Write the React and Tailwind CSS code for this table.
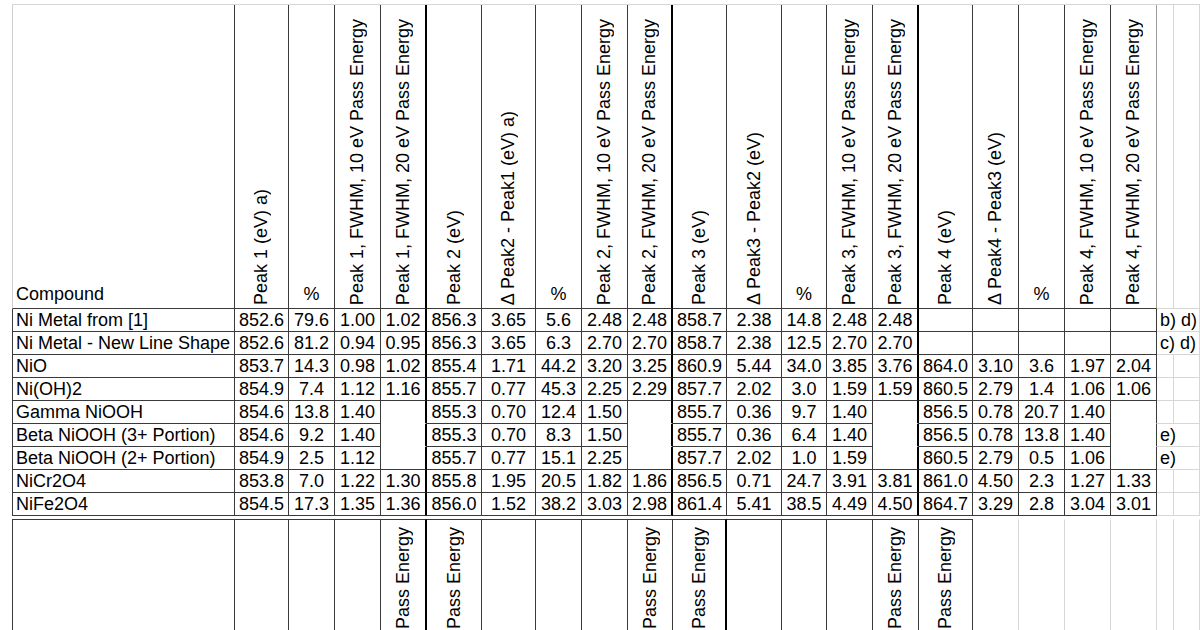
import React from "react";

const cols = [
  { w: "w-[223px]", h: "Compound", flat: true, left: true },
  { w: "w-[54px]", h: "Peak 1 (eV) a)" },
  { w: "w-[46px]", h: "%", flat: true },
  { w: "w-[46px]", h: "Peak 1, FWHM, 10 eV Pass Energy" },
  { w: "w-[46px]", h: "Peak 1, FWHM, 20 eV Pass Energy", thick: true },
  { w: "w-[55px]", h: "Peak 2 (eV)" },
  { w: "w-[54px]", h: "Δ Peak2 - Peak1 (eV) a)" },
  { w: "w-[46px]", h: "%", flat: true },
  { w: "w-[46px]", h: "Peak 2, FWHM, 10 eV Pass Energy" },
  { w: "w-[45px]", h: "Peak 2, FWHM, 20 eV Pass Energy", thick: true },
  { w: "w-[54px]", h: "Peak 3 (eV)" },
  { w: "w-[55px]", h: "Δ Peak3 - Peak2 (eV)" },
  { w: "w-[45px]", h: "%", flat: true },
  { w: "w-[46px]", h: "Peak 3, FWHM, 10 eV Pass Energy" },
  { w: "w-[46px]", h: "Peak 3, FWHM, 20 eV Pass Energy", thick: true },
  { w: "w-[54px]", h: "Peak 4 (eV)" },
  { w: "w-[46px]", h: "Δ Peak4 - Peak3 (eV)" },
  { w: "w-[46px]", h: "%", flat: true },
  { w: "w-[46px]", h: "Peak 4, FWHM, 10 eV Pass Energy" },
  { w: "w-[46px]", h: "Peak 4, FWHM, 20 eV Pass Energy" },
  { w: "w-[17px]", h: "", grid: true },
  { w: "w-[26px]", h: "", grid: true },
];

const rows = [
  ["Ni Metal from [1]", "852.6", "79.6", "1.00", "1.02", "856.3", "3.65", "5.6", "2.48", "2.48", "858.7", "2.38", "14.8", "2.48", "2.48", "", "", "", "", "", "b) d)", ""],
  ["Ni Metal - New Line Shape", "852.6", "81.2", "0.94", "0.95", "856.3", "3.65", "6.3", "2.70", "2.70", "858.7", "2.38", "12.5", "2.70", "2.70", "", "", "", "", "", "c) d)", ""],
  ["NiO", "853.7", "14.3", "0.98", "1.02", "855.4", "1.71", "44.2", "3.20", "3.25", "860.9", "5.44", "34.0", "3.85", "3.76", "864.0", "3.10", "3.6", "1.97", "2.04", "", ""],
  ["Ni(OH)2", "854.9", "7.4", "1.12", "1.16", "855.7", "0.77", "45.3", "2.25", "2.29", "857.7", "2.02", "3.0", "1.59", "1.59", "860.5", "2.79", "1.4", "1.06", "1.06", "", ""],
  ["Gamma NiOOH", "854.6", "13.8", "1.40", "", "855.3", "0.70", "12.4", "1.50", "", "855.7", "0.36", "9.7", "1.40", "", "856.5", "0.78", "20.7", "1.40", "", "", ""],
  ["Beta NiOOH (3+ Portion)", "854.6", "9.2", "1.40", "", "855.3", "0.70", "8.3", "1.50", "", "855.7", "0.36", "6.4", "1.40", "", "856.5", "0.78", "13.8", "1.40", "", "e)", ""],
  ["Beta NiOOH (2+ Portion)", "854.9", "2.5", "1.12", "", "855.7", "0.77", "15.1", "2.25", "", "857.7", "2.02", "1.0", "1.59", "", "860.5", "2.79", "0.5", "1.06", "", "e)", ""],
  ["NiCr2O4", "853.8", "7.0", "1.22", "1.30", "855.8", "1.95", "20.5", "1.82", "1.86", "856.5", "0.71", "24.7", "3.91", "3.81", "861.0", "4.50", "2.3", "1.27", "1.33", "", ""],
  ["NiFe2O4", "854.5", "17.3", "1.35", "1.36", "856.0", "1.52", "38.2", "3.03", "2.98", "861.4", "5.41", "38.5", "4.49", "4.50", "864.7", "3.29", "2.8", "3.04", "3.01", "", ""],
];

const THIN_R = "border-r border-r-[#3a3a3a]";
const THICK_R = "border-r-2 border-r-black";
const LIGHT_R = "border-r border-r-[#d6d6d6]";
const DARK_B = "border-b border-b-[#3a3a3a]";
const LIGHT_B = "border-b border-b-[#d6d6d6]";

function headerRight(c, i) {
  if (c.grid) return LIGHT_R;
  if (i === 19) return "border-r border-r-[#9a9a9a]";
  return c.thick ? THICK_R : THIN_R;
}

function Vertical({ children }) {
  return (
    <span className="[writing-mode:vertical-rl] rotate-180 whitespace-nowrap leading-[21px]">
      {children}
    </span>
  );
}

function HeaderCell({ c, i }) {
  const base = `${c.w} h-[304px] shrink-0 flex flex-col justify-end pb-[3px] ${headerRight(c, i)} ${c.grid ? LIGHT_B : DARK_B}`;
  if (c.left) {
    return (
      <div className={`${base} items-start pl-[3px] border-l border-l-[#cfcfcf]`}>
        <span className="whitespace-nowrap">{c.h}</span>
      </div>
    );
  }
  return (
    <div className={`${base} items-center`}>
      {c.flat ? <span>{c.h}</span> : c.h ? <Vertical>{c.h}</Vertical> : null}
    </div>
  );
}

const mergedCols = [4, 9, 14, 19];

function DataCell({ c, i, v, r }) {
  let right;
  if (i === 20) right = v ? "" : LIGHT_R;
  else if (c.grid) right = LIGHT_R;
  else right = c.thick ? THICK_R : THIN_R;
  let bottom;
  if (c.grid) bottom = LIGHT_B;
  else if ((r === 4 || r === 5) && mergedCols.includes(i)) bottom = "border-b border-b-transparent";
  else bottom = DARK_B;
  const left = i === 0 ? "border-l border-l-[#3a3a3a] justify-start pl-[3px]" : i === 20 ? "justify-start pl-[3px]" : "justify-center";
  return (
    <div className={`${c.w} h-[23px] shrink-0 flex items-end whitespace-nowrap ${left} ${right} ${bottom}`}>
      <span className="leading-[21px]">{v}</span>
    </div>
  );
}

const passCols = [4, 5, 9, 10, 14, 15];
const bottomThick = [4, 10];

function LowerCell({ c, i }) {
  let right;
  if (i <= 15) right = bottomThick.includes(i) ? THICK_R : THIN_R;
  else right = LIGHT_R;
  const top = i <= 15 ? "border-t border-t-[#3a3a3a]" : "border-t border-t-transparent";
  const left = i === 0 ? "border-l border-l-[#3a3a3a]" : "";
  return (
    <div className={`${c.w} h-[120px] shrink-0 flex flex-col items-center justify-start pt-[7px] ${right} ${top} ${left}`}>
      {passCols.includes(i) ? <Vertical>Pass Energy</Vertical> : null}
    </div>
  );
}

export default function App() {
  return (
    <div className="w-[1200px] h-[630px] overflow-hidden bg-white pl-[12px] pt-[4px] font-['Liberation_Sans',Arial,sans-serif] text-[18px] leading-[21px] text-black">
      <div className="flex w-max border-t border-t-[#d6d6d6]">
        {cols.map((c, i) => (
          <HeaderCell key={i} c={c} i={i} />
        ))}
      </div>
      {rows.map((row, r) => (
        <div key={r} className="flex w-max">
          {cols.map((c, i) => (
            <DataCell key={i} c={c} i={i} v={row[i]} r={r} />
          ))}
        </div>
      ))}
      <div className="mt-[3px] flex w-max">
        {cols.map((c, i) => (
          <LowerCell key={i} c={c} i={i} />
        ))}
      </div>
    </div>
  );
}
